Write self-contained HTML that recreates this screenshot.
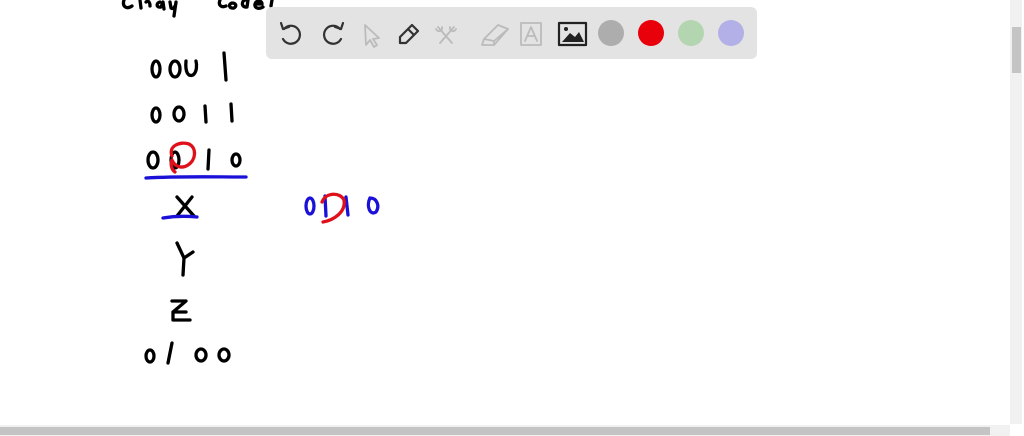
<!DOCTYPE html>
<html><head><style>
html,body{margin:0;padding:0;background:#fff;width:1024px;height:436px;overflow:hidden;position:relative}
.tb{position:absolute;left:266px;top:7px;width:491px;height:52px;background:#e3e3e3;border-radius:6px}
.dot{position:absolute;top:13px;width:26px;height:26px;border-radius:50%}
.vs{position:absolute;left:1010px;top:0;width:12px;height:424px;background:#f1f1f1}
.vt{position:absolute;left:1012px;top:27px;width:9px;height:46px;background:#c4c4c4}
.hs{position:absolute;left:0;top:425px;width:1010px;height:11px;background:#f1f1f1}
.ht{position:absolute;left:0;top:427px;width:990px;height:8px;background:#c4c4c4}
</style></head><body>
<svg width="1024" height="436" style="position:absolute;left:0;top:0" fill="none" stroke-linecap="round" stroke-linejoin="round">
<g stroke="#000" stroke-width="3.3">
<path d="M124 0 C122 6 126 10 132 6 M140 0 L141 8 M146 2 C148 0 150 2 150 6 M160 2 C156 3 156 8 161 7 L163 2 L164 9 M170 2 L171 8 C173 10 176 6 176 2 L174 16 M220 0 C218 5 221 8 226 6 M232 3 C228 4 229 9 234 8 C237 6 236 3 232 3 M246 0 C241 0 241 8 247 7 L248 0 M256 4 L262 4 C262 0 256 0 255 4 C254 9 260 9 263 7 M272 0 L271 6 M272 11 L272 12"/>
<ellipse cx="156" cy="69" rx="4" ry="8"/><ellipse cx="175" cy="69" rx="5" ry="8"/><path d="M186 61 C185 72 188 77 193 75 C197 72 197 65 196 61"/><path d="M224 53 L226 80"/>
<ellipse cx="156" cy="115" rx="4" ry="7"/><ellipse cx="179" cy="114" rx="5" ry="7"/><path d="M205 106 L206 122"/><path d="M231 104 L232 121"/>
<ellipse cx="153" cy="160" rx="5" ry="8"/><ellipse cx="175" cy="160" rx="4" ry="8"/><path d="M209 150 L208 169"/><ellipse cx="236" cy="160" rx="4" ry="6"/>
<path d="M177 197 L194 216 M192 197 L177 216"/>
<path d="M177 243 L184 258 L193 252 M184 258 L183 275"/>
<path d="M172 301 L186 301 L173 312 L186 312 M173 312 L173 320 L190 320"/>
<ellipse cx="150" cy="356" rx="4" ry="6"/><path d="M172 343 L168 363"/><ellipse cx="201" cy="355" rx="5" ry="6"/><ellipse cx="224" cy="355" rx="5" ry="6"/>
</g>
<g stroke="#1a10d8" stroke-width="3.3">
<path d="M146 178 C180 176 215 177 246 177"/>
<path d="M163 218 C175 216 187 216 197 217"/>
<ellipse cx="310" cy="206" rx="4" ry="8"/><path d="M325 196 L326 216"/><path d="M346 197 L348 215"/><path d="M370 198 C366 206 370 216 376 212 C380 206 377 198 370 198"/>
</g>
<g stroke="#e0101a" stroke-width="3.3">
<path d="M172 156 C168 146 180 141 189 144 C197 148 196 160 188 165 C182 169 175 167 172 160 C170 165 172 170 175 172"/>
<path d="M322 202 C326 192 340 192 344 200 C346 212 334 220 323 222"/>
</g>
</svg>
<div class="tb">
<svg width="491" height="52" style="position:absolute;left:0;top:0" fill="none" stroke-linecap="round" stroke-linejoin="round">
<g stroke="#333" stroke-width="2.2">
<path d="M18 22 A9 9 0 1 1 17 32"/><path d="M15 16 L17 22 L23 20"/>
<path d="M74 22 A9 9 0 1 0 75 32"/><path d="M77 16 L75 22 L69 20"/>
<path d="M134 30 L146 18 L152 24 L140 36 L134 36 Z M142 22 L148 28"/>
</g>
<g stroke="#bbb" stroke-width="1.8">
<path d="M99 18 L100 38 L104 33 L108 40 L111 38 L107 32 L113 31 Z"/>
<path d="M172 20 L186 36 M188 20 L174 36 M176 20 A3 3 0 1 1 170 22 M184 20 A3 3 0 1 0 190 22"/>
<path d="M216 38 L228 38 L242 22 L232 18 L218 32 Z M218 32 L228 34 M228 38 L228 34 L242 22"/>
<rect x="255" y="16" width="20" height="22"/><path d="M259 34 L265 20 L271 34 M261 29 L269 29"/>
</g>
<rect x="293" y="16" width="27" height="22" stroke="#222" stroke-width="2.2"/>
<path d="M296 35 L304 26 L309 30 L313 25 L318 35 Z" fill="#222"/><circle cx="300" cy="22" r="2" fill="#222"/>
</svg>
<div class="dot" style="left:332px;background:#adadad"></div>
<div class="dot" style="left:372px;background:#e8000b"></div>
<div class="dot" style="left:412px;background:#b3d6b1"></div>
<div class="dot" style="left:452px;background:#b2b0e6"></div>
</div>
<div class="vs"></div><div class="vt"></div>
<div class="hs"></div><div class="ht"></div>
</body></html>
